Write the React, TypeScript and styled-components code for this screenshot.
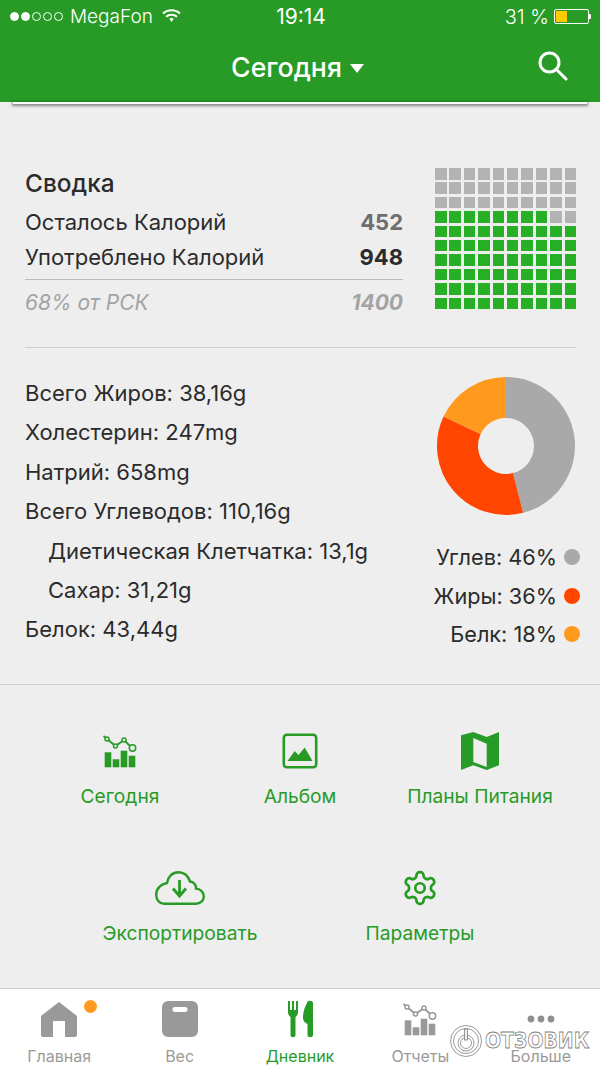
import React from 'react';
import styled, { createGlobalStyle } from 'styled-components';

const GREEN = '#279b26';
const FONT = 'Inter, Roboto, "Noto Sans", sans-serif';

const GlobalStyle = createGlobalStyle`
  html, body { margin: 0; padding: 0; background: #eeeeee; }
  body { font-family: ${FONT}; color: #2b2b2b; }
  * { box-sizing: border-box; }
`;

const Page = styled.div`
  position: relative;
  width: 600px;
  height: 1067px;
  overflow: hidden;
  display: flex;
  flex-direction: column;
  background: #eeeeee;
`;

const TopBar = styled.header`
  height: 102px;
  flex: none;
  background: ${GREEN};
  color: #fff;
  display: flex;
  flex-direction: column;
`;

const StatusBar = styled.div`
  height: 33px;
  padding: 0 11px 0 10px;
  display: grid;
  grid-template-columns: 1fr auto 1fr;
  align-items: center;
  font-size: 19px;
  font-weight: 300;
`;

const StatusTime = styled.span`
  font-size: 21px;
  font-weight: 400;
  padding-left: 3px;
`;

const StatusLeft = styled.div`
  display: flex;
  align-items: center;
  gap: 7px;
`;

const StatusRight = styled.div`
  display: flex;
  align-items: center;
  justify-content: flex-end;
  gap: 5px;
  font-size: 20px;
`;

const Signal = styled.div`
  display: flex;
  gap: 2px;
`;

const SignalDot = styled.span<{ $on: boolean }>`
  width: 9px;
  height: 9px;
  border-radius: 50%;
  border: 1px solid #fff;
  background: ${({ $on }) => ($on ? '#fff' : 'transparent')};
`;

const WifiIcon = styled.svg`
  margin-left: 2px;
  margin-top: -2px;
`;

const Battery = styled.div`
  position: relative;
  width: 35px;
  height: 15px;
  border: 1px solid #fff;
  border-radius: 2px;
  padding: 1px;
`;

const BatteryFill = styled.div`
  width: 11px;
  height: 100%;
  background: #ffcc00;
`;

const BatteryTip = styled.span`
  position: absolute;
  right: -3px;
  top: 4px;
  width: 2px;
  height: 5px;
  background: #fff;
  border-radius: 0 1px 1px 0;
`;

const NavRow = styled.div`
  position: relative;
  flex: 1;
  display: flex;
  align-items: center;
  justify-content: center;
  gap: 8px;
  padding: 0 5px 1px 0;
  font-size: 26.7px;
  font-weight: 500;
`;

const Caret = styled.span`
  width: 0;
  height: 0;
  margin-top: 2px;
  border-left: 7px solid transparent;
  border-right: 7px solid transparent;
  border-top: 9px solid #fff;
`;

const SearchButton = styled.div`
  position: absolute;
  right: 32px;
  top: 18px;
  width: 30px;
  height: 30px;
`;

const Shadow = styled.div`
  flex: none;
  height: 2px;
  margin: 0 13px;
  background: #fff;
  box-shadow: 0 1px 3px 1px rgba(0, 0, 0, 0.45);
`;

const Summary = styled.section`
  flex: none;
  margin: 0 24px 0 25px;
  padding: 61px 0 23px;
  border-bottom: 1px solid #cfcfcf;
  display: flex;
  justify-content: space-between;
`;

const SummaryText = styled.div`
  width: 378px;
`;

const SummaryTitle = styled.div`
  font-size: 24.4px;
  font-weight: 500;
  line-height: 36px;
  margin-bottom: 3px;
`;

const SummaryRow = styled.div<{ $total?: boolean }>`
  display: flex;
  justify-content: space-between;
  align-items: center;
  height: 35px;
  font-size: 22px;
  ${({ $total }) =>
    $total &&
    `
    height: 45px;
    margin-top: 5px;
    border-top: 1px solid #bbbbbb;
    color: #a3a3a3;
    font-size: 21px;
    font-style: italic;
  `}
`;

const SummaryValue = styled.span<{ $tone: string }>`
  font-weight: 700;
  color: ${({ $tone }) => $tone};
`;

const Waffle = styled.div`
  margin-top: 3px;
  width: 141px;
  height: 141px;
  display: grid;
  grid-template-columns: repeat(10, 11.5px);
  grid-auto-rows: 11.5px;
  gap: 2.9px;
`;

const WaffleCell = styled.span<{ $on: boolean }>`
  background: ${({ $on }) => ($on ? '#27b026' : '#b3b3b3')};
`;

const Nutrition = styled.section`
  flex: none;
  height: 337px;
  border-bottom: 1px solid #cfcfcf;
  padding: 26px 20px 0 25px;
  display: flex;
  justify-content: space-between;
`;

const NutrientList = styled.div`
  display: flex;
  flex-direction: column;
`;

const Nutrient = styled.div<{ $sub?: boolean }>`
  height: 39.4px;
  line-height: 39.4px;
  font-size: 22px;
  padding-left: ${({ $sub }) => ($sub ? '23px' : '0')};
`;

const MacroColumn = styled.div`
  display: flex;
  flex-direction: column;
  align-items: flex-end;
`;

const Donut = styled.svg`
  width: 140px;
  height: 140px;
  margin: 2px 4px 0 0;
`;

const Legend = styled.div`
  margin-top: 22px;
  display: flex;
  flex-direction: column;
  align-items: flex-end;
`;

const LegendRow = styled.div`
  height: 38.4px;
  display: flex;
  align-items: center;
  gap: 7px;
  font-size: 21.7px;
`;

const LegendDot = styled.span<{ $color: string }>`
  width: 16px;
  height: 16px;
  border-radius: 50%;
  background: ${({ $color }) => $color};
`;

const Actions = styled.section`
  flex: 1;
  padding-top: 44px;
  display: flex;
  flex-direction: column;
  gap: 45px;
`;

const ActionRow = styled.div`
  display: flex;
  justify-content: center;
`;

const Action = styled.div<{ $wide?: boolean }>`
  width: ${({ $wide }) => ($wide ? '240px' : '180px')};
  height: 92px;
  display: flex;
  flex-direction: column;
  align-items: center;
  color: ${GREEN};
  font-size: 19.2px;
  white-space: nowrap;
`;

const ActionIcon = styled.div`
  height: 44px;
  display: flex;
  align-items: center;
  justify-content: center;
  margin-bottom: 11px;
`;

const TabBar = styled.nav`
  flex: none;
  height: 79px;
  background: #fff;
  border-top: 1px solid #c9c9c9;
  display: grid;
  grid-template-columns: repeat(5, 120.4px);
  justify-content: center;
`;

const Tab = styled.div<{ $active?: boolean }>`
  position: relative;
  display: flex;
  flex-direction: column;
  align-items: center;
  padding-top: 10px;
  font-size: 16px;
  color: ${({ $active }) => ($active ? GREEN : '#9a9a9a')};
`;

const TabIcon = styled.div`
  height: 40px;
  margin-bottom: 7px;
  display: flex;
  align-items: center;
  justify-content: center;
`;

const Badge = styled.span`
  position: absolute;
  left: 85px;
  top: 11px;
  width: 13px;
  height: 13px;
  border-radius: 50%;
  background: #ff9a1f;
`;

const Watermark = styled.div`
  position: absolute;
  left: 450px;
  top: 1025px;
  display: flex;
  align-items: center;
  gap: 3px;
  pointer-events: none;
`;

const WatermarkText = styled.span`
  font-family: "DejaVu Sans", sans-serif;
  font-size: 21px;
  font-weight: 700;
  line-height: 1;
  color: rgba(255, 255, 255, 0.8);
  -webkit-text-stroke: 0.8px #808080;
  transform: scaleX(0.9);
  transform-origin: left center;
`;

const ChartIcon = ({ color, bg }: { color: string; bg: string }) => (
  <svg width="34" height="33" viewBox="0 0 34 33" fill="none">
    <path d="M0.5 1 L4 4 L12.5 11 L21 5 L29 13" stroke={color} strokeWidth="1.8" />
    <circle cx="4" cy="4" r="2" fill={bg} stroke={color} strokeWidth="1.5" />
    <circle cx="12.5" cy="11" r="2" fill={bg} stroke={color} strokeWidth="1.5" />
    <circle cx="21" cy="5" r="2" fill={bg} stroke={color} strokeWidth="1.5" />
    <circle cx="29.5" cy="13" r="3.2" fill={bg} stroke={color} strokeWidth="1.5" />
    <rect x="1.7" y="17.3" width="6.6" height="15" fill={color} />
    <rect x="9.7" y="24.3" width="6.6" height="8" fill={color} />
    <rect x="17.7" y="15.7" width="6.6" height="16.6" fill={color} />
    <rect x="25.7" y="20.7" width="6.6" height="11.6" fill={color} />
  </svg>
);

const AlbumIcon = () => (
  <svg width="36" height="36" viewBox="0 0 36 36" fill="none">
    <rect x="1.8" y="1.8" width="32.4" height="32.4" rx="3" stroke={GREEN} strokeWidth="2.6" />
    <path d="M5.5 28 L12.7 18 L16.5 22 L22.7 14.5 L30.5 28 Z" fill={GREEN} />
  </svg>
);

const MapIcon = () => (
  <svg width="38" height="38" viewBox="0 0 38 38">
    <path
      d="M0 3.3 L12.3 0 L25.7 5 L38 0 V33.3 L25.7 38 L12.3 33.3 L0 38 Z M12.3 6 V30 L25.7 35 V11.7 Z"
      fill={GREEN}
      fillRule="evenodd"
    />
  </svg>
);

const CloudIcon = () => (
  <svg width="50" height="34" viewBox="0 0 50 34" fill="none">
    <path
      d="M9 32.8 H41 C45.5 32.8 48.8 29.5 48.8 25.5 C48.8 21 45 17.8 41 17.6 C41.5 14 38.5 10.5 35 10.5 C33 4.5 28.5 1.2 23.5 1.2 C17.5 1.2 13 5.5 12 12 C6 13 1.2 17.5 1.2 23.5 C1.2 29 4.5 32.8 9 32.8 Z"
      stroke={GREEN}
      strokeWidth="2.4"
    />
    <path d="M24.5 9 V24 M18 17.5 L24.5 25 L31 17.5" stroke={GREEN} strokeWidth="2.8" />
  </svg>
);

const GearIcon = () => (
  <svg width="38" height="38" viewBox="0 0 24 24" fill="none" stroke={GREEN} strokeWidth="1.7" strokeLinecap="round" strokeLinejoin="round">
    <path d="M12.22 2h-.44a2 2 0 0 0-2 2v.18a2 2 0 0 1-1 1.73l-.43.25a2 2 0 0 1-2 0l-.15-.08a2 2 0 0 0-2.73.73l-.22.38a2 2 0 0 0 .73 2.73l.15.1a2 2 0 0 1 1 1.72v.51a2 2 0 0 1-1 1.74l-.15.09a2 2 0 0 0-.73 2.73l.22.38a2 2 0 0 0 2.73.73l.15-.08a2 2 0 0 1 2 0l.43.25a2 2 0 0 1 1 1.73V20a2 2 0 0 0 2 2h.44a2 2 0 0 0 2-2v-.18a2 2 0 0 1 1-1.73l.43-.25a2 2 0 0 1 2 0l.15.08a2 2 0 0 0 2.73-.73l.22-.39a2 2 0 0 0-.73-2.73l-.15-.08a2 2 0 0 1-1-1.74v-.5a2 2 0 0 1 1-1.74l.15-.09a2 2 0 0 0 .73-2.73l-.22-.38a2 2 0 0 0-2.73-.73l-.15.08a2 2 0 0 1-2 0l-.43-.25a2 2 0 0 1-1-1.73V4a2 2 0 0 0-2-2z" />
    <circle cx="12" cy="12" r="3" />
  </svg>
);

const HomeIcon = () => (
  <svg width="36" height="36" viewBox="0 0 36 36">
    <path
      d="M18 1 L36 15 V34 C36 35 35 36 34 36 H24 V20 H12 V36 H2 C1 36 0 35 0 34 V15 Z"
      fill="#999"
    />
  </svg>
);

const ScaleIcon = () => (
  <svg width="36" height="36" viewBox="0 0 36 36">
    <path
      d="M6 0 H30 A6 6 0 0 1 36 6 V30 A6 6 0 0 1 30 36 H6 A6 6 0 0 1 0 30 V6 A6 6 0 0 1 6 0 Z M13 6 A2.5 2.5 0 0 0 13 11 H23 A2.5 2.5 0 0 0 23 6 Z"
      fill="#999"
      fillRule="evenodd"
    />
  </svg>
);

const CutleryIcon = () => (
  <svg width="25" height="38" viewBox="0 0 25 38" fill={GREEN}>
    <path d="M0 1 H2 V10 H4 V1 H6 V10 H8 V1 H10 V12 C10 15 8.5 16 7.5 17 V35 C7.5 38 2.5 38 2.5 35 V17 C1.5 16 0 15 0 12 Z" />
    <path d="M19 3 C19 0 25 0 25 3 V35 C25 38 19.5 38 19.5 35 V24 C17 23 15 21 15 18 C15 12 17 6 19 3 Z" />
  </svg>
);

const MoreIcon = () => (
  <svg width="28" height="8" viewBox="0 0 28 8" fill="#8f8f8f">
    <circle cx="4" cy="4" r="3.4" />
    <circle cx="14" cy="4" r="3.4" />
    <circle cx="24" cy="4" r="3.4" />
  </svg>
);

const WatermarkLogo = () => (
  <svg width="32" height="32" viewBox="0 0 32 32" fill="none" stroke="#808080" strokeWidth="0.8">
    <circle cx="16" cy="16" r="15.5" fill="rgba(255,255,255,0.5)" />
    <circle cx="16" cy="16" r="12.5" />
    <circle cx="16" cy="18" r="8" />
    <circle cx="16" cy="18" r="5.5" />
    <rect x="14.5" y="4" width="3" height="11" fill="#eee" />
  </svg>
);

const waffle = Array.from({ length: 100 }, (_, i) => i >= 30 && i !== 38 && i !== 39);

const nutrients: [string, boolean?][] = [
  ['Всего Жиров: 38,16g'],
  ['Холестерин: 247mg'],
  ['Натрий: 658mg'],
  ['Всего Углеводов: 110,16g'],
  ['Диетическая Клетчатка: 13,1g', true],
  ['Сахар: 31,21g', true],
  ['Белок: 43,44g'],
];

const legend = [
  { label: 'Углев: 46%', color: '#a9a9a9' },
  { label: 'Жиры: 36%', color: '#ff4500' },
  { label: 'Белк: 18%', color: '#ff9a1f' },
];

// donut slices, angles in percent of the circle from 12 o'clock
const slice = (from: number, to: number) => {
  const pt = (p: number, r: number) => {
    const a = (p / 100) * 2 * Math.PI;
    return `${(70 + r * Math.sin(a)).toFixed(2)} ${(70 - r * Math.cos(a)).toFixed(2)}`;
  };
  const large = to - from > 50 ? 1 : 0;
  return `M${pt(from, 69)} A69 69 0 ${large} 1 ${pt(to, 69)} L${pt(to, 28)} A28 28 0 ${large} 0 ${pt(from, 28)} Z`;
};

export default function App() {
  return (
    <Page>
      <GlobalStyle />
      <TopBar>
        <StatusBar>
          <StatusLeft>
            <Signal>
              {[true, true, false, false, false].map((on, i) => (
                <SignalDot key={i} $on={on} />
              ))}
            </Signal>
            <span>MegaFon</span>
            <WifiIcon width="19" height="15" viewBox="0 0 19 15" fill="none" stroke="#fff" strokeWidth="2">
              <path d="M1 5.5 C5.5 1 13.5 1 18 5.5" />
              <path d="M4 8.8 C7 6 12 6 15 8.8" />
              <path d="M7.2 10.8 L9.5 14 L11.8 10.8 C10.5 9.8 8.5 9.8 7.2 10.8 Z" fill="#fff" stroke="none" />
            </WifiIcon>
          </StatusLeft>
          <StatusTime>19:14</StatusTime>
          <StatusRight>
            <span>31 %</span>
            <Battery>
              <BatteryFill />
              <BatteryTip />
            </Battery>
          </StatusRight>
        </StatusBar>
        <NavRow>
          <span>Сегодня</span>
          <Caret />
          <SearchButton>
            <svg width="30" height="30" viewBox="0 0 30 30" fill="none" stroke="#fff" strokeWidth="3">
              <circle cx="11.5" cy="11.5" r="9.5" />
              <path d="M18 18 L28 28" strokeLinecap="round" />
            </svg>
          </SearchButton>
        </NavRow>
      </TopBar>
      <Shadow />

      <Summary>
        <SummaryText>
          <SummaryTitle>Сводка</SummaryTitle>
          <SummaryRow>
            <span>Осталось Калорий</span>
            <SummaryValue $tone="#6e6e6e">452</SummaryValue>
          </SummaryRow>
          <SummaryRow>
            <span>Употреблено Калорий</span>
            <SummaryValue $tone="#2b2b2b">948</SummaryValue>
          </SummaryRow>
          <SummaryRow $total>
            <span>68% от РСК</span>
            <SummaryValue $tone="#a3a3a3">1400</SummaryValue>
          </SummaryRow>
        </SummaryText>
        <Waffle>
          {waffle.map((on, i) => (
            <WaffleCell key={i} $on={on} />
          ))}
        </Waffle>
      </Summary>

      <Nutrition>
        <NutrientList>
          {nutrients.map(([label, sub]) => (
            <Nutrient key={label} $sub={sub}>
              {label}
            </Nutrient>
          ))}
        </NutrientList>
        <MacroColumn>
          <Donut viewBox="0 0 140 140">
            <path d={slice(0, 46)} fill="#a9a9a9" />
            <path d={slice(46, 82)} fill="#ff4500" />
            <path d={slice(82, 100)} fill="#ff9a1f" />
          </Donut>
          <Legend>
            {legend.map((item) => (
              <LegendRow key={item.label}>
                <span>{item.label}</span>
                <LegendDot $color={item.color} />
              </LegendRow>
            ))}
          </Legend>
        </MacroColumn>
      </Nutrition>

      <Actions>
        <ActionRow>
          <Action>
            <ActionIcon>
              <ChartIcon color={GREEN} bg="#eeeeee" />
            </ActionIcon>
            Сегодня
          </Action>
          <Action>
            <ActionIcon>
              <AlbumIcon />
            </ActionIcon>
            Альбом
          </Action>
          <Action>
            <ActionIcon>
              <MapIcon />
            </ActionIcon>
            Планы Питания
          </Action>
        </ActionRow>
        <ActionRow>
          <Action $wide>
            <ActionIcon>
              <CloudIcon />
            </ActionIcon>
            Экспортировать
          </Action>
          <Action $wide>
            <ActionIcon>
              <GearIcon />
            </ActionIcon>
            Параметры
          </Action>
        </ActionRow>
      </Actions>

      <TabBar>
        <Tab>
          <TabIcon>
            <HomeIcon />
          </TabIcon>
          Главная
          <Badge />
        </Tab>
        <Tab>
          <TabIcon>
            <ScaleIcon />
          </TabIcon>
          Вес
        </Tab>
        <Tab $active>
          <TabIcon>
            <CutleryIcon />
          </TabIcon>
          Дневник
        </Tab>
        <Tab>
          <TabIcon>
            <ChartIcon color="#999" bg="#ffffff" />
          </TabIcon>
          Отчеты
        </Tab>
        <Tab>
          <TabIcon>
            <MoreIcon />
          </TabIcon>
          Больше
        </Tab>
      </TabBar>

      <Watermark>
        <WatermarkLogo />
        <WatermarkText>ОТЗОВИК</WatermarkText>
      </Watermark>
    </Page>
  );
}
